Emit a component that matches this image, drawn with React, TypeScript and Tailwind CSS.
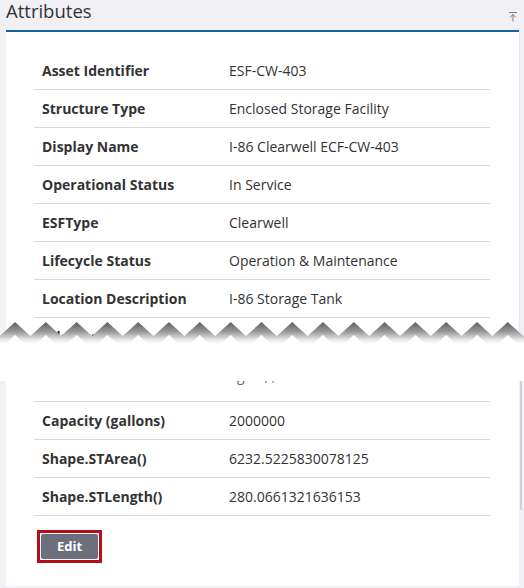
import React from "react";

const topRows: [string, string][] = [
  ["Asset Identifier", "ESF-CW-403"],
  ["Structure Type", "Enclosed Storage Facility"],
  ["Display Name", "I-86 Clearwell ECF-CW-403"],
  ["Operational Status", "In Service"],
  ["ESFType", "Clearwell"],
  ["Lifecycle Status", "Operation & Maintenance"],
  ["Location Description", "I-86 Storage Tank"],
  ["Address", ""],
];

const bottomRows: [string, string][] = [
  ["Capacity (gallons)", "2000000"],
  ["Shape.STArea()", "6232.5225830078125"],
  ["Shape.STLength()", "280.0661321636153"],
];

function Row({ label, value }: { label: string; value: string }) {
  return (
    <div className="flex h-[38px] items-center border-b border-[#dadada] text-[14px] leading-[19px] text-[#333]">
      <div className="w-[195px] shrink-0 pl-[8px] font-bold">{label}</div>
      <div className="whitespace-nowrap">{value}</div>
    </div>
  );
}

function zigzag(offset: number) {
  const pts: string[] = [];
  for (let k = -1; k <= 18; k++) {
    const px = 15 + 30.8 * k;
    const vx = 30.4 + 30.8 * k;
    pts.push(`${px.toFixed(1)},${4 + offset}`);
    pts.push(`${vx.toFixed(1)},${18 + offset}`);
  }
  return pts;
}

function Tear() {
  const a = zigzag(0);
  const b = zigzag(13);
  const pathA = `M${a[0]} L${a.slice(1).join(" L")} L560,44 L-40,44 Z`;
  const pathB = `M${b[0]} L${b.slice(1).join(" L")} L560,44 L-40,44 Z`;
  return (
    <svg
      className="pointer-events-none absolute left-0 top-[318px]"
      width="524"
      height="44"
      viewBox="0 0 524 44"
    >
      <defs>
        <linearGradient id="tearShade" x1="0" y1="4" x2="0" y2="26" gradientUnits="userSpaceOnUse">
          <stop offset="0" stopColor="#5e5e5e" />
          <stop offset="0.45" stopColor="#9a9a9a" />
          <stop offset="0.8" stopColor="#e6e6e6" />
          <stop offset="1" stopColor="#ffffff" />
        </linearGradient>
      </defs>
      <path d={pathA} fill="url(#tearShade)" />
      <path d={pathB} fill="#ffffff" />
    </svg>
  );
}

export default function App() {
  return (
    <div className="relative flex h-[588px] w-[524px] flex-col overflow-hidden bg-[#f0f0f5] font-['Open_Sans',sans-serif] text-[#333]">
      {/* top piece */}
      <div className="h-[336px] shrink-0 overflow-hidden">
        <div className="ml-[6px] flex h-[30px] w-[513px] items-start justify-between">
          <div className="text-[18.5px] leading-[22px] text-[#333]">Attributes</div>
          <svg className="mr-[1px] mt-[11px]" width="10" height="11" viewBox="0 0 10 11" fill="none" stroke="#7c7c7c" strokeWidth="1">
            <path d="M1 1.5 H9" />
            <path d="M5 3.5 V10.5" />
            <path d="M2.2 6.3 L5 3.5 L7.8 6.3" />
          </svg>
        </div>
        <div className="flex">
          <div className="w-[6px] shrink-0" />
          <div className="w-[513px] shrink-0 border-t-2 border-[#1463a6] bg-white pl-[28px] pr-[29px] pt-[20px]">
            {topRows.map(([l, v]) => (
              <Row key={l} label={l} value={v} />
            ))}
          </div>
          <div className="w-[5px] shrink-0 border-l border-[#e6e6ec]" />
        </div>
      </div>

      {/* white gap of the torn image */}
      <div className="h-[45px] shrink-0 bg-white" />

      {/* bottom piece */}
      <div className="flex h-[207px] shrink-0">
        <div className="w-[6px] shrink-0" />
        <div className="h-[205px] w-[513px] shrink-0 bg-white pl-[28px] pr-[29px]">
          <div className="flex h-[21px] border-b border-[#dadada] text-[14px] leading-[19px] text-[#333]">
            <div className="w-[195px] shrink-0" />
            <div className="h-[20px] overflow-hidden">
              <div className="ml-[8px] mt-[-15px] whitespace-nowrap text-[#666]">ga    o,    ,s</div>
            </div>
          </div>
          {bottomRows.map(([l, v]) => (
            <Row key={l} label={l} value={v} />
          ))}
          <div className="ml-[3px] mt-[14px] inline-flex border-[3px] border-[#b30f17] p-px">
            <button className="flex h-[25px] w-[57px] items-center justify-center rounded-[2px] bg-[#6c6f7c] text-[13px] font-bold text-white">
              Edit
            </button>
          </div>
        </div>
        <div className="relative w-[5px] shrink-0">
          <div className="ml-px h-[129px] w-[2px] bg-[#d2d2d8]" />
        </div>
      </div>

      <Tear />
    </div>
  );
}
